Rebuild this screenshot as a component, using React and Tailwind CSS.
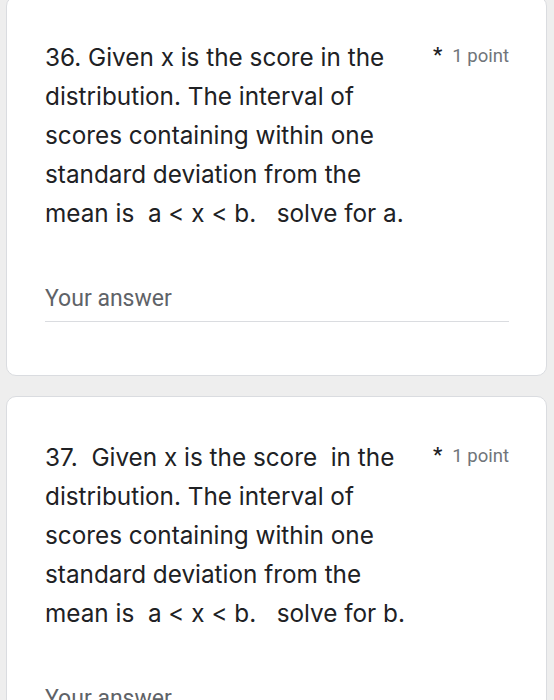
import React from "react";

const questions = [
  {
    lines: [
      "36. Given x is the score in the",
      "distribution. The interval of",
      "scores containing within one",
      "standard deviation from the",
      "mean is\u00a0\u00a0a < x < b.\u00a0\u00a0\u00a0solve for a.",
    ],
    first: true,
  },
  {
    lines: [
      "37.\u00a0\u00a0Given x is the score\u00a0\u00a0in the",
      "distribution. The interval of",
      "scores containing within one",
      "standard deviation from the",
      "mean is\u00a0\u00a0a < x < b.\u00a0\u00a0\u00a0solve for b.",
    ],
  },
];

const Card = ({ q }) => {
  return (
    <div
      className={`bg-white border border-[#dadce0] rounded-[10px] pl-[38px] pr-[37px] pt-[41px] pb-[53px] ${
        q.first ? "-mt-[4px]" : ""
      }`}
    >
      {/* Question header */}
      <div className="flex items-start">
        <p
          className="text-[24.3px] leading-[39px] text-[#202124]"
          style={{ fontFamily: "Inter, sans-serif" }}
        >
          {q.lines.map((l, i) => (
            <span key={i} className="block whitespace-nowrap">
              {l}
            </span>
          ))}
        </p>
        <div className="ml-auto flex items-start pt-[7px]">
          <span className="text-[21px] leading-[20px] font-medium text-[#202124] mr-[10px]">*</span>
          <span className="text-[18.5px] leading-[20px] pt-[1px] text-[#70757a]">1 point</span>
        </div>
      </div>

      {/* Answer field */}
      <div className="mt-[52px] border-b border-[#dadce0] pb-[8px]">
        <span className="text-[23px] leading-[28px] text-[#5f6368]">Your answer</span>
      </div>
    </div>
  );
};

export default function App() {
  return (
    <div
      className="h-[700px] overflow-hidden bg-[#eeeeee] pl-[6px] pr-[7px] flex flex-col gap-[20px]"
      style={{ fontFamily: "Roboto, 'Noto Sans', sans-serif" }}
    >
      {questions.map((q, i) => (
        <Card key={i} q={q} />
      ))}
    </div>
  );
}
